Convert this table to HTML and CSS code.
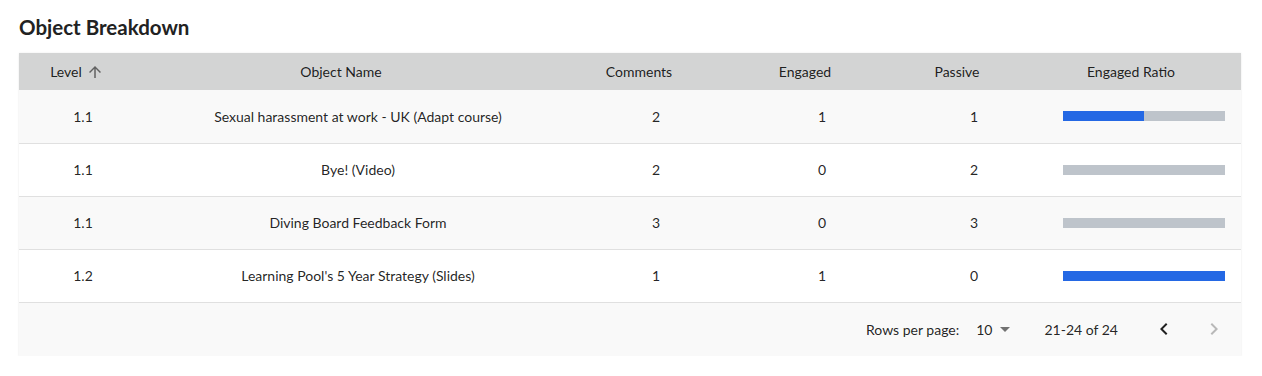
FILE: index.html
```html
<!DOCTYPE html>
<html>
<head>
<meta charset="utf-8">
<link rel="stylesheet" href="styles.css">
</head>
<body>
<div class="page">
  <h2 class="title">Object Breakdown</h2>
  <div class="card">
    <table class="grid">
      <colgroup>
        <col class="c1"><col class="c2"><col class="c3"><col class="c4"><col class="c5"><col class="c6">
      </colgroup>
      <thead>
        <tr>
          <th><span class="hd">Level<svg class="sort" viewBox="0 0 24 24"><path d="M4 12l1.41 1.41L11 7.83V20h2V7.83l5.58 5.59L20 12l-8-8-8 8z"/></svg></span></th>
          <th><span class="hd">Object Name<span class="sp"></span></span></th>
          <th><span class="hd">Comments<span class="sp"></span></span></th>
          <th><span class="hd">Engaged<span class="sp"></span></span></th>
          <th><span class="hd">Passive<span class="sp"></span></span></th>
          <th class="last"><span class="hd">Engaged Ratio<span class="sp"></span></span></th>
        </tr>
      </thead>
      <tbody>
        <tr class="odd">
          <td>1.1</td><td>Sexual harassment at work - UK (Adapt course)</td><td>2</td><td>1</td><td>1</td>
          <td><div class="bar"><div class="fill" style="width:50%"></div></div></td>
        </tr>
        <tr>
          <td>1.1</td><td>Bye! (Video)</td><td>2</td><td>0</td><td>2</td>
          <td><div class="bar"><div class="fill" style="width:0%"></div></div></td>
        </tr>
        <tr class="odd">
          <td>1.1</td><td>Diving Board Feedback Form</td><td>3</td><td>0</td><td>3</td>
          <td><div class="bar"><div class="fill" style="width:0%"></div></div></td>
        </tr>
        <tr>
          <td>1.2</td><td>Learning Pool's 5 Year Strategy (Slides)</td><td>1</td><td>1</td><td>0</td>
          <td><div class="bar"><div class="fill" style="width:100%"></div></div></td>
        </tr>
      </tbody>
    </table>
    <div class="footer">
      <span class="cap">Rows per page:</span>
      <span class="select">10<svg class="drop" viewBox="0 0 24 24"><path d="M7 10l5 5 5-5z"/></svg></span>
      <span class="cap range">21-24 of 24</span>
      <span class="btn"><svg viewBox="0 0 24 24"><path d="M15.41 16.59L10.83 12l4.58-4.59L14 6l-6 6 6 6 1.41-1.41z"/></svg></span>
      <span class="btn dis"><svg viewBox="0 0 24 24"><path d="M8.59 16.59L13.17 12 8.59 7.41 10 6l6 6-6 6-1.41-1.41z"/></svg></span>
    </div>
  </div>
</div>
</body>
</html>
```

FILE: styles.css
```css
* { box-sizing: border-box; }
html, body { margin: 0; padding: 0; background: #fff; }
body { font-family: Lato, "Open Sans", sans-serif; color: rgba(0,0,0,0.87); }
.page { padding: 15px 21px 0 19px; }
.title {
  margin: 0 0 14px 0;
  font-size: 20.5px;
  font-weight: 700;
  line-height: 24px;
  color: #222;
}
.card {
  width: 1222px;
  background: #fff;
  box-shadow: 0px 1px 0px 0px rgba(0,0,0,0.33), 0px 2px 2px -1px rgba(0,0,0,0.12), 0px 0px 2px 0px rgba(0,0,0,0.08);
}
.grid { width: 100%; border-collapse: collapse; table-layout: fixed; }
.c1 { width: 128px; }
.c2 { width: 422px; }
.c3 { width: 174px; }
.c4 { width: 158px; }
.c5 { width: 146px; }
.c6 { width: 194px; }
th {
  background: #d3d4d4;
  height: 37px;
  padding: 0 16px;
  font-weight: 400;
  font-size: 14px;
  text-align: center;
  color: rgba(0,0,0,0.87);
}
th.last { padding-right: 8px; }
.hd { display: inline-flex; align-items: center; white-space: nowrap; }
.sort { width: 18px; height: 18px; margin-left: 4px; margin-right: 12px; fill: rgba(0,0,0,0.54); }
.sp { display: inline-block; width: 34px; }
td {
  height: 53px;
  padding: 0 16px;
  border-bottom: 1px solid #e0e0e0;
  font-size: 14px;
  text-align: center;
  vertical-align: middle;
}
tr.odd td { background: #f9f9f9; }
.bar { height: 10px; background: #bec4cb; display: flex; }
.fill { height: 100%; background: #2468e4; }
.footer {
  height: 53px;
  background: #f9f9f9;
  display: flex;
  align-items: center;
  justify-content: flex-end;
  padding-right: 3px;
  font-size: 14px;
}
.cap { color: rgba(0,0,0,0.87); }
.select { display: inline-flex; align-items: center; margin-left: 17px; margin-right: 19px; }
.drop { width: 24px; height: 24px; fill: rgba(0,0,0,0.54); margin-left: 1px; }
.range { margin-left: 8px; margin-right: 22px; }
.btn { width: 48px; height: 48px; display: inline-flex; align-items: center; justify-content: center; }
.btn + .btn { margin-left: 2px; }
.btn svg { width: 24px; height: 24px; fill: rgba(0,0,0,0.87); }
.btn.dis svg { fill: rgba(0,0,0,0.26); }
```
